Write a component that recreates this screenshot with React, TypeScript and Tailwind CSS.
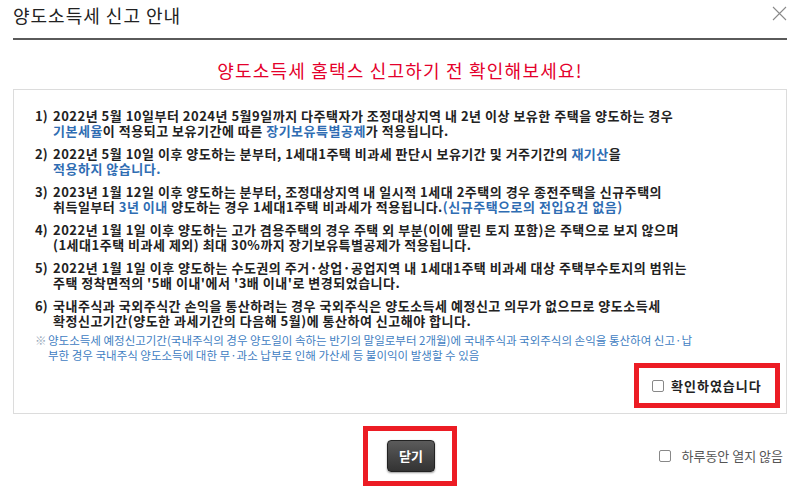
import type { ReactNode } from "react";

const FONT = { fontFamily: '"Noto Sans CJK KR", "Noto Sans", sans-serif' };

function Blue({ children }: { children: ReactNode }) {
  return <span className="text-[#2f6db3]">{children}</span>;
}

const items: { no: string; first: ReactNode; second: ReactNode }[] = [
  {
    no: "1)",
    first: "2022년 5월 10일부터 2024년 5월9일까지 다주택자가 조정대상지역 내 2년 이상 보유한 주택을 양도하는 경우",
    second: (
      <>
        <Blue>기본세율</Blue>이 적용되고 보유기간에 따른 <Blue>장기보유특별공제</Blue>가 적용됩니다.
      </>
    ),
  },
  {
    no: "2)",
    first: (
      <>
        2022년 5월 10일 이후 양도하는 분부터, 1세대1주택 비과세 판단시 보유기간 및 거주기간의 <Blue>재기산</Blue>을
      </>
    ),
    second: <Blue>적용하지 않습니다.</Blue>,
  },
  {
    no: "3)",
    first: "2023년 1월 12일 이후 양도하는 분부터, 조정대상지역 내 일시적 1세대 2주택의 경우 종전주택을 신규주택의",
    second: (
      <>
        취득일부터 <Blue>3년 이내</Blue> 양도하는 경우 1세대1주택 비과세가 적용됩니다.<Blue>(신규주택으로의 전입요건 없음)</Blue>
      </>
    ),
  },
  {
    no: "4)",
    first: "2022년 1월 1일 이후 양도하는 고가 겸용주택의 경우 주택 외 부분(이에 딸린 토지 포함)은 주택으로 보지 않으며",
    second: "(1세대1주택 비과세 제외) 최대 30%까지 장기보유특별공제가 적용됩니다.",
  },
  {
    no: "5)",
    first: "2022년 1월 1일 이후 양도하는 수도권의 주거·상업·공업지역 내 1세대1주택 비과세 대상 주택부수토지의 범위는",
    second: "주택 정착면적의 '5배 이내'에서 '3배 이내'로 변경되었습니다.",
  },
  {
    no: "6)",
    first: "국내주식과 국외주식간 손익을 통산하려는 경우 국외주식은 양도소득세 예정신고 의무가 없으므로 양도소득세",
    second: "확정신고기간(양도한 과세기간의 다음해 5월)에 통산하여 신고해야 합니다.",
  },
];

function CheckBox() {
  return <span className="inline-block h-[12px] w-[12px] shrink-0 rounded-[2px] border border-[#888] bg-white" />;
}

export default function App() {
  return (
    <div className="h-[488px] w-[800px] overflow-hidden bg-white px-[13px]" style={FONT}>
      {/* header */}
      <div className="flex h-[40px] items-start justify-between border-b-2 border-[#5a5a5a]">
        <h1 className="mt-[4px] text-[18px] leading-[22px] tracking-[1px] text-[#222]">양도소득세 신고 안내</h1>
        <svg width="15" height="15" viewBox="0 0 15 15" className="mt-[6px]">
          <path d="M1 1 L14 14 M14 1 L1 14" stroke="#8a8a8a" strokeWidth="1.1" fill="none" />
        </svg>
      </div>

      <p className="mt-[19px] text-center text-[18px] leading-[22px] tracking-[1.2px] text-[#e4002b]">
        양도소득세 홈택스 신고하기 전 확인해보세요!
      </p>

      {/* notice box */}
      <div className="mt-[8px] flex h-[325px] flex-col border border-[#dcdcdc] pl-[21px] pr-[6px] pt-[18px]">
        <ul className="flex flex-col gap-[8px]">
          {items.map((it) => (
            <li key={it.no} className="flex whitespace-nowrap text-[13px] font-semibold leading-[15px] tracking-[0.5px] text-[#222]">
              <span className="w-[18px] shrink-0 tracking-normal">{it.no}</span>
              <div>
                {it.first}
                <br />
                {it.second}
              </div>
            </li>
          ))}
        </ul>

        <div className="mt-[5px] flex whitespace-nowrap text-[11.5px] leading-[15px] text-[#3f80c2]">
          <span className="w-[13px] shrink-0 text-[#9ab]">※</span>
          <div>
            양도소득세 예정신고기간(국내주식의 경우 양도일이 속하는 반기의 말일로부터 2개월)에 국내주식과 국외주식의 손익을 통산하여 신고·납
            <br />
            부한 경우 국내주식 양도소득에 대한 무·과소 납부로 인해 가산세 등 불이익이 발생할 수 있음
          </div>
        </div>

        <div className="flex justify-end">
          <label className="flex h-[45px] w-[146px] items-center gap-[7px] border-[5px] border-[#ec1c24] pl-[13px]">
            <CheckBox />
            <span className="text-[13px] font-semibold tracking-[1px] text-[#222]">확인하였습니다</span>
          </label>
        </div>
      </div>

      {/* footer */}
      <div className="mt-[12px] flex items-center">
        <div className="ml-[350px] flex h-[60px] w-[94px] items-center border-[5px] border-[#ec1c24] pl-[19px]">
          <button className="h-[32px] w-[48px] rounded-[4px] border border-[#222] bg-gradient-to-b from-[#5b5b5b] to-[#333] text-[13px] font-semibold text-white shadow-[0_1px_2px_rgba(0,0,0,0.4)]">
            닫기
          </button>
        </div>
        <label className="ml-auto mr-[4px] flex items-center gap-[10px]">
          <CheckBox />
          <span className="text-[13px] text-[#555]">하루동안 열지 않음</span>
        </label>
      </div>
    </div>
  );
}
